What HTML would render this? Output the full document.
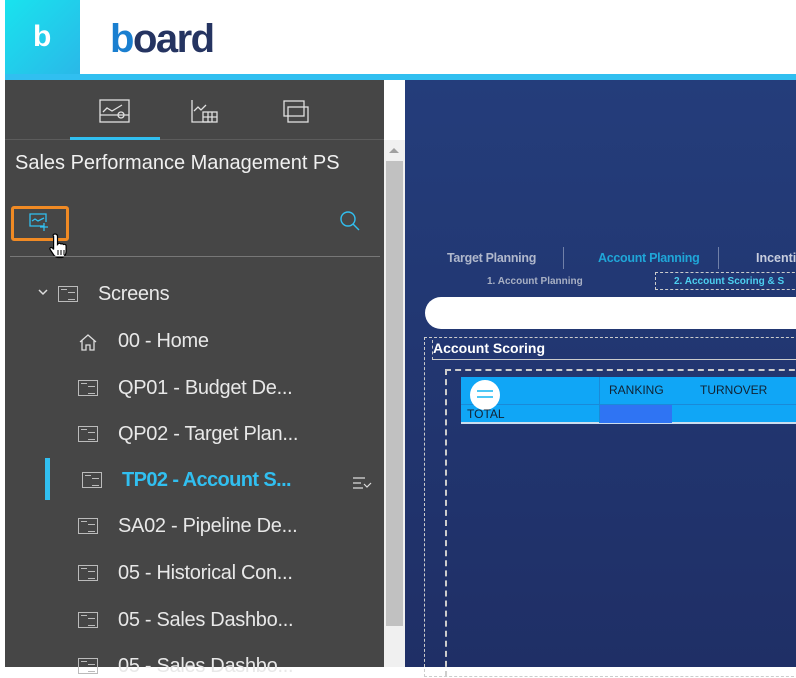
<!DOCTYPE html>
<html><head><style>
*{margin:0;padding:0;box-sizing:border-box}
body{width:796px;height:667px;overflow:hidden;background:#fff;font-family:"Liberation Sans",sans-serif;position:relative}
.a{position:absolute}
.side{left:5px;top:80px;width:379px;height:587px;background:#464646}
.item{position:absolute;left:118px;font-size:20px;color:#e8e8e8;white-space:nowrap;letter-spacing:-0.3px}
.ic{position:absolute;left:78px;width:20px;height:16px;border:1.5px solid #bbb}
.ic:before{content:"";position:absolute;left:2px;top:2px;width:6px;height:3px;border-top:1px solid #bbb}
.ic:after{content:"";position:absolute;left:9px;top:5px;width:7px;height:6px;border-top:1px solid #bbb;border-bottom:1px solid #bbb}
</style></head><body>
<div class="a" style="left:5px;top:0;width:75px;height:74px;background:linear-gradient(135deg,#19e3ee,#2ab8e8)"></div>
<div class="a" style="left:33px;top:22px;color:#fff;font-weight:bold;font-size:30px;line-height:30px">b</div>
<div class="a" style="left:110px;top:17px;font-size:40px;font-weight:bold;color:#253461;letter-spacing:-1.5px;line-height:44px"><span style="color:#1a7fd0">b</span>oard</div>
<div class="a" style="left:5px;top:74px;width:791px;height:6px;background:#31bff0"></div>
<div class="a side"></div>
<div class="a" style="left:5px;top:139px;width:379px;height:1px;background:#5c5c5c"></div>
<div class="a" style="left:70px;top:137px;width:90px;height:3px;background:#31bff0"></div>
<svg class="a" style="left:95px;top:95px" width="220" height="35" fill="none" stroke="#e0e0e0" stroke-width="1.3">
<rect x="5" y="5" width="29" height="22"/><path d="M8 17l4-4 5 3 10-6M5 20h29"/><circle cx="26" cy="20" r="3"/>
<path d="M97 5v22h18M99 16l4-4 3 3 5-5"/><rect x="108" y="17" width="14" height="10"/><path d="M108 22h14M113 17v10M117 17v10"/>
<rect x="189" y="6" width="20" height="15"/><rect x="193" y="12" width="20" height="15"/>
</svg>
<div class="a" style="left:15px;top:152px;font-size:20px;color:#f0f0f0">Sales Performance Management PS</div>
<div class="a" style="left:11px;top:206px;width:58px;height:35px;border:3px solid #f08a24;border-radius:3px"></div>
<svg class="a" style="left:28px;top:212px" width="24" height="20" fill="none" stroke="#31bff0" stroke-width="1.3"><path d="M16 14H2V2h16v8M4 9l3-2 3 2 6-3M16 11v8M12 15h8"/></svg>
<svg class="a" style="left:48px;top:232px" width="24" height="28"><path d="M7 2c1.5 0 2.5 1 2.5 2.5v8l1-1c1-.5 2 0 2.5.5 1-.5 2 0 2.5.5 1-.5 2.2 0 2.6 1v6c0 3-2 6-5 6h-3c-2 0-3-1-4-2l-4-6c-.5-1 0-2 1-2s2 1 2.5 2V4.5C4.5 3 5.5 2 7 2z" fill="#fff" stroke="#000" stroke-width="1.2"/><path d="M10 18v5M13 18v5M16 18v5" stroke="#000"/></svg>
<svg class="a" style="left:338px;top:209px" width="24" height="24" fill="none" stroke="#31bff0" stroke-width="1.4"><circle cx="10" cy="10" r="7"/><path d="M15 15l6 6"/></svg>
<div class="a" style="left:10px;top:256px;width:370px;height:1px;background:#777"></div>
<svg class="a" style="left:38px;top:289px" width="12" height="8" fill="none" stroke="#ddd" stroke-width="1.5"><path d="M1 1l4 4 4-4"/></svg>
<div class="ic" style="left:58px;top:286px"></div>
<div class="item" style="left:98px;top:283px">Screens</div>
<svg class="a" style="left:78px;top:332px" width="20" height="20" fill="none" stroke="#ddd" stroke-width="1.3"><path d="M2 10l8-7 8 7M4 8v10h4v-5h4v5h4V8"/></svg>
<div class="item" style="top:330px">00 - Home</div>
<div class="ic" style="top:380px"></div><div class="item" style="top:377px">QP01 - Budget De...</div>
<div class="ic" style="top:426px"></div><div class="item" style="top:423px">QP02 - Target Plan...</div>
<div class="a" style="left:45px;top:458px;width:5px;height:42px;background:#31bff0"></div>
<div class="ic" style="left:82px;top:472px"></div><div class="item" style="left:122px;top:469px;color:#31bff0;font-weight:bold;letter-spacing:-0.6px">TP02 - Account S...</div>
<svg class="a" style="left:352px;top:476px" width="22" height="14" fill="none" stroke="#ddd" stroke-width="1.2"><path d="M1 2h12M1 7h8M1 12h10M12 8l3 3 4-4"/></svg>
<div class="ic" style="top:518px"></div><div class="item" style="top:515px">SA02 - Pipeline De...</div>
<div class="ic" style="top:565px"></div><div class="item" style="top:562px">05 - Historical Con...</div>
<div class="ic" style="top:612px"></div><div class="item" style="top:609px">05 - Sales Dashbo...</div>
<div class="ic" style="top:658px"></div><div class="item" style="top:655px">05 - Sales Dashbo...</div>
<div class="a" style="left:384px;top:140px;width:21px;height:527px;background:#f0f0f0"></div>
<div class="a" style="left:389px;top:148px;width:0;height:0;border:5px solid transparent;border-bottom-color:#a0a0a0;border-top:0"></div>
<div class="a" style="left:386px;top:161px;width:17px;height:465px;background:#c1c1c1"></div>
<div class="a" style="left:405px;top:80px;width:391px;height:587px;background:linear-gradient(#243d7b,#1f2f66)"></div>
<div class="a" style="left:447px;top:251px;font-size:12.5px;font-weight:bold;color:#b0b8cc;letter-spacing:-0.3px">Target Planning</div>
<div class="a" style="left:563px;top:247px;width:1px;height:22px;background:#7080a8"></div>
<div class="a" style="left:598px;top:251px;font-size:12.5px;font-weight:bold;color:#1fa6d8;letter-spacing:-0.3px">Account Planning</div>
<div class="a" style="left:718px;top:247px;width:1px;height:22px;background:#7080a8"></div>
<div class="a" style="left:756px;top:251px;font-size:12.5px;font-weight:bold;color:#c8cede">Incenti</div>
<div class="a" style="left:487px;top:276px;font-size:10px;font-weight:bold;color:#a8b0c4">1. Account Planning</div>
<div class="a" style="left:655px;top:272px;width:150px;height:18px;border:1px dashed #ccc;font-size:10px;font-weight:bold;color:#4dd0f0;padding:3px 0 0 18px;white-space:nowrap;overflow:hidden">2. Account Scoring &amp; S</div>
<div class="a" style="left:425px;top:297px;width:380px;height:32px;background:#fff;border-radius:16px 0 0 16px"></div>
<div class="a" style="left:424px;top:337px;width:380px;height:340px;border:1px dashed #ccc;border-right:0"></div>
<div class="a" style="left:432px;top:340px;width:370px;height:20px;border-bottom:1px solid #ccc;font-size:14px;font-weight:bold;color:#fff;border-left:1px dashed #ccc">Account Scoring</div>
<div class="a" style="left:445px;top:369px;width:360px;height:308px;border:2px dashed #ccc;border-right:0;border-bottom:0"></div>
<div class="a" style="left:461px;top:377px;width:340px;height:47px;background:#10a6f6;border-bottom:2px solid #cde"></div>
<div class="a" style="left:599px;top:377px;width:1px;height:46px;background:#1a8ad8"></div>
<div class="a" style="left:461px;top:404px;width:340px;height:1px;background:#1a8ad8"></div>
<div class="a" style="left:600px;top:405px;width:72px;height:18px;background:#2f74f3"></div>
<div class="a" style="left:470px;top:380px;width:30px;height:30px;border-radius:50%;background:#fff"></div>
<div class="a" style="left:477px;top:390px;width:16px;height:2px;background:#4dc8f5;box-shadow:0 6px 0 #4dc8f5"></div>
<div class="a" style="left:609px;top:383px;font-size:12px;color:#123">RANKING</div>
<div class="a" style="left:700px;top:383px;font-size:12px;color:#123">TURNOVER</div>
<div class="a" style="left:467px;top:407px;font-size:12px;color:#123">TOTAL</div>
</body></html>
